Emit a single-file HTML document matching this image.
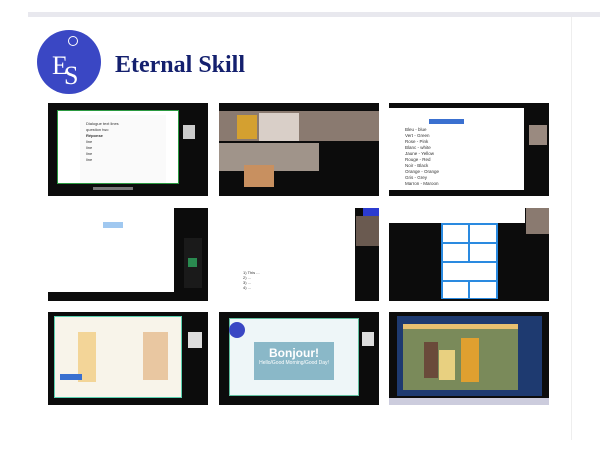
<!DOCTYPE html><html><head><style>
*{margin:0;padding:0;box-sizing:border-box}
body{width:600px;height:450px;background:#fff;position:relative;overflow:hidden;font-family:"Liberation Sans",sans-serif}
.a{position:absolute}
.t{position:absolute;background:#0c0c0c;width:160px;height:93px;overflow:hidden}
</style></head><body>
<div class="a" style="left:28px;top:12px;width:572px;height:5px;background:#e8e8ee"></div>
<div class="a" style="left:571px;top:17px;width:1px;height:423px;background:#eee"></div>
<div class="a" style="left:37px;top:30px;width:64px;height:64px;border-radius:50%;background:#3a47c4"></div>
<div class="a" style="left:52px;top:51px;font:26px 'Liberation Serif',serif;color:#fff">E</div>
<div class="a" style="left:64px;top:61px;font:26px 'Liberation Serif',serif;color:#fff">S</div>
<div class="a" style="left:68px;top:36px;width:10px;height:10px;border-radius:50%;border:1.5px solid #fff"></div>
<div class="a" style="left:115px;top:52px;font:bold 24px 'Liberation Serif',serif;color:#14206e">Eternal Skill</div>

<!-- row1 -->
<div class="t" style="left:48px;top:103px">
 <div class="a" style="left:9px;top:7px;width:122px;height:74px;background:#fff;border:1px solid #2a9a40"></div>
 <div class="a" style="left:32px;top:12px;width:86px;height:68px;background:#fafafa;font-size:4px;line-height:6px;color:#333;padding:6px">Dialogue text lines<br>question two<br><b>Réponse</b><br>line<br>line<br>line<br>line</div>
 <div class="a" style="left:135px;top:22px;width:12px;height:14px;background:#ccc"></div>
 <div class="a" style="left:45px;top:84px;width:40px;height:3px;background:#777"></div>
</div>
<div class="t" style="left:219px;top:103px">
 <div class="a" style="left:0;top:8px;width:160px;height:30px;background:#8a7a70"></div>
 <div class="a" style="left:18px;top:12px;width:20px;height:24px;background:#d4a030"></div>
 <div class="a" style="left:40px;top:10px;width:40px;height:28px;background:#d9cfc8"></div>
 <div class="a" style="left:0;top:40px;width:100px;height:28px;background:#a0948a"></div>
 <div class="a" style="left:25px;top:62px;width:30px;height:22px;background:#c89060"></div>
</div>
<div class="t" style="left:389px;top:103px">
 <div class="a" style="left:0;top:5px;width:135px;height:82px;background:#fff"></div>
 <div class="a" style="left:40px;top:16px;width:35px;height:5px;background:#3a70d0"></div>
 <div class="a" style="left:16px;top:24px;font-size:4.5px;line-height:6px;color:#333">Bleu - blue<br>Vert - Green<br>Rose - Pink<br>Blanc - white<br>Jaune - Yellow<br>Rouge - Red<br>Noir - Black<br>Orange - Orange<br>Gris - Grey<br>Marron - Maroon</div>
 <div class="a" style="left:140px;top:22px;width:18px;height:20px;background:#9a8a80"></div>
</div>
<!-- row2 -->
<div class="t" style="left:48px;top:208px">
 <div class="a" style="left:0;top:0;width:126px;height:84px;background:#fff"></div>
 <div class="a" style="left:55px;top:14px;width:20px;height:6px;background:#a0c8f0"></div>
 <div class="a" style="left:136px;top:30px;width:18px;height:50px;background:#1a1a1a"></div>
 <div class="a" style="left:140px;top:50px;width:9px;height:9px;background:#2a8a50"></div>
</div>
<div class="t" style="left:219px;top:208px">
 <div class="a" style="left:0;top:0;width:136px;height:93px;background:#fff"></div>
 <div class="a" style="left:137px;top:8px;width:23px;height:30px;background:#6a5a50"></div>
 <div class="a" style="left:144px;top:0;width:16px;height:8px;background:#2b3bd0"></div>
 <div class="a" style="left:24px;top:62px;font-size:4px;line-height:5px;color:#333">1) This ...<br>2) ...<br>3) ...<br>4) ...</div>
</div>
<div class="t" style="left:389px;top:208px">
 <div class="a" style="left:0;top:0;width:136px;height:15px;background:#fff"></div>
 <div class="a" style="left:52px;top:15px;width:57px;height:76px;background:#2a8ae0"></div>
 <div class="a" style="left:54px;top:17px;width:25px;height:17px;background:#fff"></div>
 <div class="a" style="left:81px;top:17px;width:26px;height:17px;background:#fff"></div>
 <div class="a" style="left:54px;top:36px;width:25px;height:17px;background:#fff"></div>
 <div class="a" style="left:81px;top:36px;width:26px;height:17px;background:#fff"></div>
 <div class="a" style="left:54px;top:55px;width:53px;height:17px;background:#fff"></div>
 <div class="a" style="left:54px;top:74px;width:25px;height:16px;background:#fff"></div>
 <div class="a" style="left:81px;top:74px;width:26px;height:16px;background:#fff"></div>
 <div class="a" style="left:137px;top:0;width:23px;height:26px;background:#8a7a70"></div>
</div>
<!-- row3 -->
<div class="t" style="left:48px;top:312px">
 <div class="a" style="left:6px;top:4px;width:128px;height:82px;background:#f8f4ea;border:1px solid #5ad0b0"></div>
 <div class="a" style="left:30px;top:20px;width:18px;height:50px;background:#f0c060;opacity:.6"></div>
 <div class="a" style="left:95px;top:20px;width:25px;height:48px;background:#e0a870;opacity:.6"></div>
 <div class="a" style="left:12px;top:62px;width:22px;height:6px;background:#3a70d0"></div>
 <div class="a" style="left:140px;top:20px;width:14px;height:16px;background:#ddd"></div>
</div>
<div class="t" style="left:219px;top:312px">
 <div class="a" style="left:10px;top:6px;width:130px;height:78px;background:#eef6f8;border:1px solid #60c0a0"></div>
 <div class="a" style="left:10px;top:10px;width:16px;height:16px;border-radius:50%;background:#3a47c4"></div>
 <div class="a" style="left:35px;top:30px;width:80px;height:38px;background:#8ab8c8;color:#fff;text-align:center;font-weight:bold;font-size:12px;padding-top:4px">Bonjour!<div style="font-size:5px;font-weight:normal">Hello/Good Morning/Good Day!</div></div>
 <div class="a" style="left:143px;top:20px;width:12px;height:14px;background:#ddd"></div>
</div>
<div class="t" style="left:389px;top:312px">
 <div class="a" style="left:8px;top:4px;width:145px;height:80px;background:#1e3a70"></div>
 <div class="a" style="left:14px;top:12px;width:115px;height:66px;background:#7a8a5a"></div>
 <div class="a" style="left:14px;top:12px;width:115px;height:5px;background:#e8c070"></div>
 <div class="a" style="left:35px;top:30px;width:14px;height:36px;background:#6a4a3a"></div>
 <div class="a" style="left:50px;top:38px;width:16px;height:30px;background:#e8d080"></div>
 <div class="a" style="left:72px;top:26px;width:18px;height:44px;background:#e0a030"></div>
 <div class="a" style="left:0;top:86px;width:160px;height:7px;background:#ccd"></div>
</div>
</body></html>
